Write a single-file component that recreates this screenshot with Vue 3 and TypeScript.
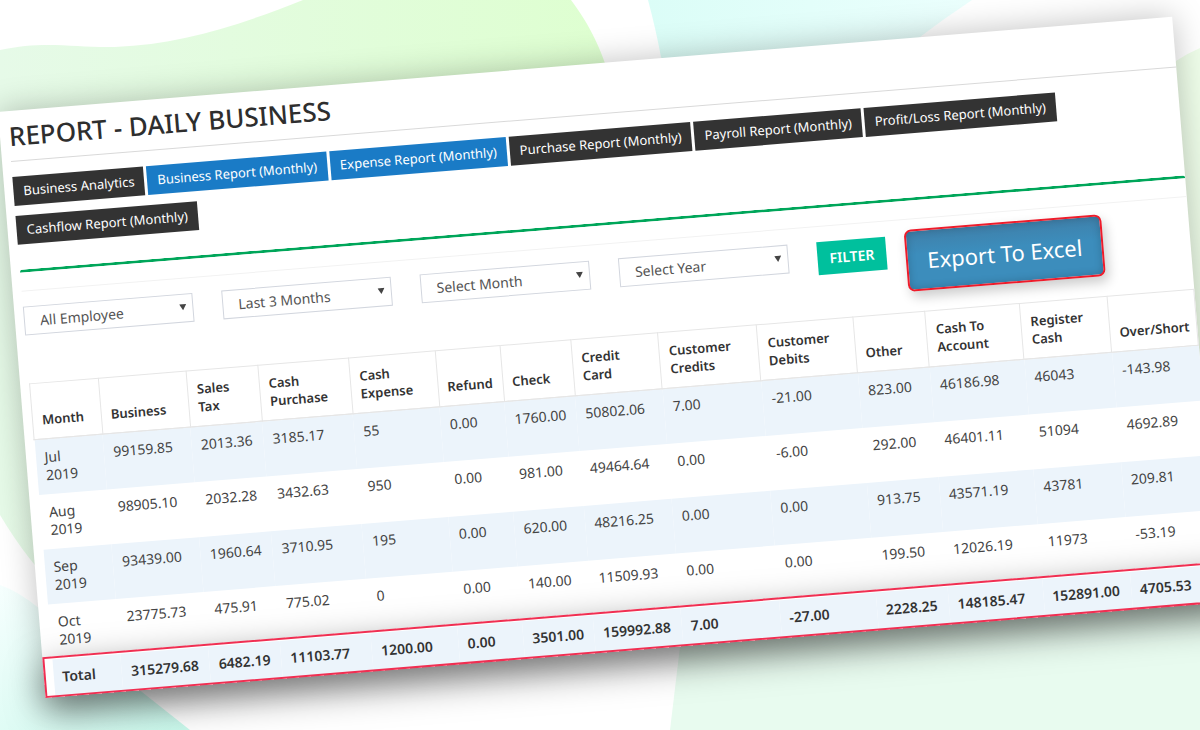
<script setup lang="ts">
import { ref } from 'vue'

interface Tab {
  label: string
  active?: boolean
}
interface Column {
  label: string
  weight: number
}
interface Filter {
  name: string
  placeholder: string
}

const tabs: Tab[] = [
  { label: 'Business Analytics' },
  { label: 'Business Report (Monthly)', active: true },
  { label: 'Expense Report (Monthly)', active: true },
  { label: 'Purchase Report (Monthly)' },
  { label: 'Payroll Report (Monthly)' },
  { label: 'Profit/Loss Report (Monthly)' },
  { label: 'Cashflow Report (Monthly)' },
]

const filters = ref<Filter[]>([
  { name: 'Employee', placeholder: 'All Employee' },
  { name: 'Period', placeholder: 'Last 3 Months' },
  { name: 'Month', placeholder: 'Select Month' },
  { name: 'Year', placeholder: 'Select Year' },
])

const columns: Column[] = [
  { label: 'Month', weight: 69 },
  { label: 'Business', weight: 88 },
  { label: 'Sales Tax', weight: 72 },
  { label: 'Cash Purchase', weight: 91 },
  { label: 'Cash Expense', weight: 87 },
  { label: 'Refund', weight: 65 },
  { label: 'Check', weight: 71 },
  { label: 'Credit Card', weight: 88 },
  { label: 'Customer Credits', weight: 99 },
  { label: 'Customer Debits', weight: 97 },
  { label: 'Other', weight: 72 },
  { label: 'Cash To Account', weight: 95 },
  { label: 'Register Cash', weight: 88 },
  { label: 'Over/Short', weight: 87 },
]
const totalWeight = columns.reduce((sum, c) => sum + c.weight, 0)
const share = (c: Column) => `${(c.weight / totalWeight) * 100}%`

const rows: string[][] = [
  ['Jul 2019', '99159.85', '2013.36', '3185.17', '55', '0.00', '1760.00', '50802.06', '7.00', '-21.00', '823.00', '46186.98', '46043', '-143.98'],
  ['Aug 2019', '98905.10', '2032.28', '3432.63', '950', '0.00', '981.00', '49464.64', '0.00', '-6.00', '292.00', '46401.11', '51094', '4692.89'],
  ['Sep 2019', '93439.00', '1960.64', '3710.95', '195', '0.00', '620.00', '48216.25', '0.00', '0.00', '913.75', '43571.19', '43781', '209.81'],
  ['Oct 2019', '23775.73', '475.91', '775.02', '0', '0.00', '140.00', '11509.93', '0.00', '0.00', '199.50', '12026.19', '11973', '-53.19'],
]
const totals: string[] = ['Total', '315279.68', '6482.19', '11103.77', '1200.00', '0.00', '3501.00', '159992.88', '7.00', '-27.00', '2228.25', '148185.47', '152891.00', '4705.53']
</script>

<template>
  <div class="stage">
    <svg class="backdrop" viewBox="0 0 1200 730" preserveAspectRatio="none" aria-hidden="true">
      <defs>
        <linearGradient id="leaf" x1="0" y1="0" x2="1" y2="0">
          <stop offset="0" stop-color="#e6fae8" />
          <stop offset="1" stop-color="#deffd0" />
        </linearGradient>
        <linearGradient id="aqua" x1="0" y1="0" x2="1" y2="0">
          <stop offset="0" stop-color="#dbfdf7" />
          <stop offset="1" stop-color="#ebfffd" />
        </linearGradient>
        <linearGradient id="pool" x1="0" y1="0" x2="1" y2="1">
          <stop offset="0" stop-color="#f6fffe" />
          <stop offset="1" stop-color="#c9f9ec" />
        </linearGradient>
      </defs>
      <path fill="url(#leaf)" d="M0 50C45 40 75 48 115 47C180 44 235 27 303 0H571C590 25 602 50 612 85V500L60 592Q28 562 0 515Z" />
      <path fill="url(#aqua)" d="M648 0Q656 30 661 57L700 120L870 80C900 50 935 25 972 0Z" />
      <path fill="#eefde9" d="M1200 48Q1188 53 1176 61L1100 200V400H1200Z" />
      <path fill="url(#pool)" d="M0 585Q18 591 40 609L142 692L190 730H0Z" />
      <path fill="#e8fbef" d="M670 730L682 630L1200 500V730Z" />
    </svg>

    <main class="sheet">
      <div class="body">
        <h1>REPORT - DAILY BUSINESS</h1>
        <nav class="tabs" aria-label="Reports">
          <a v-for="t in tabs" :key="t.label" href="#" :class="{ active: t.active }">{{ t.label }}</a>
        </nav>
        <section class="panel">
          <form class="filters" @submit.prevent>
            <label v-for="f in filters" :key="f.name" class="field">
              <select :aria-label="f.name">
                <option>{{ f.placeholder }}</option>
              </select>
              <svg class="arrow" viewBox="0 0 7 7" aria-hidden="true"><path d="M0 0.5H7L3.5 6.5Z" /></svg>
            </label>
            <button type="submit" class="filter">FILTER</button>
            <button type="button" class="export">Export To Excel</button>
          </form>
          <table>
            <colgroup>
              <col v-for="c in columns" :key="c.label" :style="{ width: share(c) }" />
            </colgroup>
            <thead>
              <tr>
                <th v-for="c in columns" :key="c.label" scope="col">{{ c.label }}</th>
              </tr>
            </thead>
            <tbody>
              <tr v-for="r in rows" :key="r[0]">
                <td v-for="(v, i) in r" :key="i">{{ v }}</td>
              </tr>
            </tbody>
            <tfoot>
              <tr>
                <td v-for="(v, i) in totals" :key="i">{{ v }}</td>
              </tr>
            </tfoot>
          </table>
        </section>
      </div>
      <div class="highlight" aria-hidden="true"></div>
    </main>
  </div>
</template>

<style>
body {
  background: #fff;
}
</style>

<style scoped>
* {
  box-sizing: border-box;
}
.stage {
  position: relative;
  min-height: 100vh;
  padding: 112px 23px 0 0;
  overflow: hidden;
  font-family: 'Noto Sans', 'Open Sans', sans-serif;
  font-size: 14px;
  line-height: 18px;
  color: #444;
}
.backdrop {
  position: absolute;
  inset: 0;
  width: 100%;
  height: 100%;
}
.sheet {
  position: relative;
  width: calc(100% + 1px);
  margin-left: -2px;
  transform: rotate(-4.64deg);
  transform-origin: 0 0;
  background: #fff;
  box-shadow: 0 0 32px rgba(0, 0, 0, 0.25);
}
.body {
  padding: 0 0 1px 9px;
}
h1 {
  margin: 0;
  height: 51px;
  padding-top: 7px;
  border-bottom: 1px solid #d9d9d9;
  font-size: 26px;
  line-height: 36px;
  font-weight: 500;
  color: #2e2e2e;
}
.tabs {
  display: flex;
  flex-wrap: wrap;
  gap: 10px 3px;
  padding: 15px 100px 25px 0;
  font-size: 13px;
}
.tabs a {
  padding: 5px 10px 6px;
  background: #333;
  color: #fff;
  text-decoration: none;
}
.tabs a.active {
  background: #1a7bc6;
}
.panel {
  border-top: 3px solid #00a65a;
  border-radius: 3px;
}
.filters {
  display: flex;
  align-items: flex-start;
  gap: 29px;
  height: 93px;
  margin-top: 18px;
  padding-top: 15px;
  border-top: 1px solid #f2f2f2;
}
.field {
  position: relative;
  width: 170px;
}
select {
  display: block;
  width: 100%;
  height: 29px;
  padding: 0 24px 0 15px;
  border: 1px solid #d2d6de;
  border-radius: 0;
  appearance: none;
  background: #fff;
  color: #555;
  font: inherit;
}
.arrow {
  position: absolute;
  top: 10px;
  right: 7px;
  width: 7px;
  height: 7px;
  fill: #444;
  pointer-events: none;
}
button {
  border: 0;
  color: #fff;
  font: inherit;
  white-space: nowrap;
}
.filter {
  width: 69px;
  height: 33px;
  background: #00c09d;
  font-weight: 600;
}
.export {
  height: 62px;
  width: 198px;
  margin: -5px 0 0 -10px;
  border: 2px solid #ed1c2b;
  border-radius: 7px;
  background: linear-gradient(#3f80aa, #3c8dbc 40%);
  box-shadow: 3px 6px 12px rgba(0, 0, 0, 0.2), inset 0 0 8px rgba(0, 0, 0, 0.2);
  font-size: 22px;
}
table {
  width: 100%;
  table-layout: fixed;
  border-collapse: collapse;
}
th,
td {
  padding: 9px 9px 10px;
  text-align: left;
  vertical-align: top;
}
th {
  border: 1px solid #e6e6e6;
  vertical-align: bottom;
  font-size: 13px;
  font-weight: 600;
  color: #333;
}
tbody td:first-child {
  padding-right: 20px;
}
tbody tr:nth-child(odd),
tfoot tr {
  background: #ecf4fb;
}
tfoot td {
  font-weight: 600;
  color: #333;
}
.highlight {
  position: absolute;
  left: 0;
  right: -40px;
  bottom: 0;
  height: 41px;
  border: 2px solid #f02f52;
  box-shadow: 0 14px 36px rgba(0, 0, 0, 0.5);
}
</style>
